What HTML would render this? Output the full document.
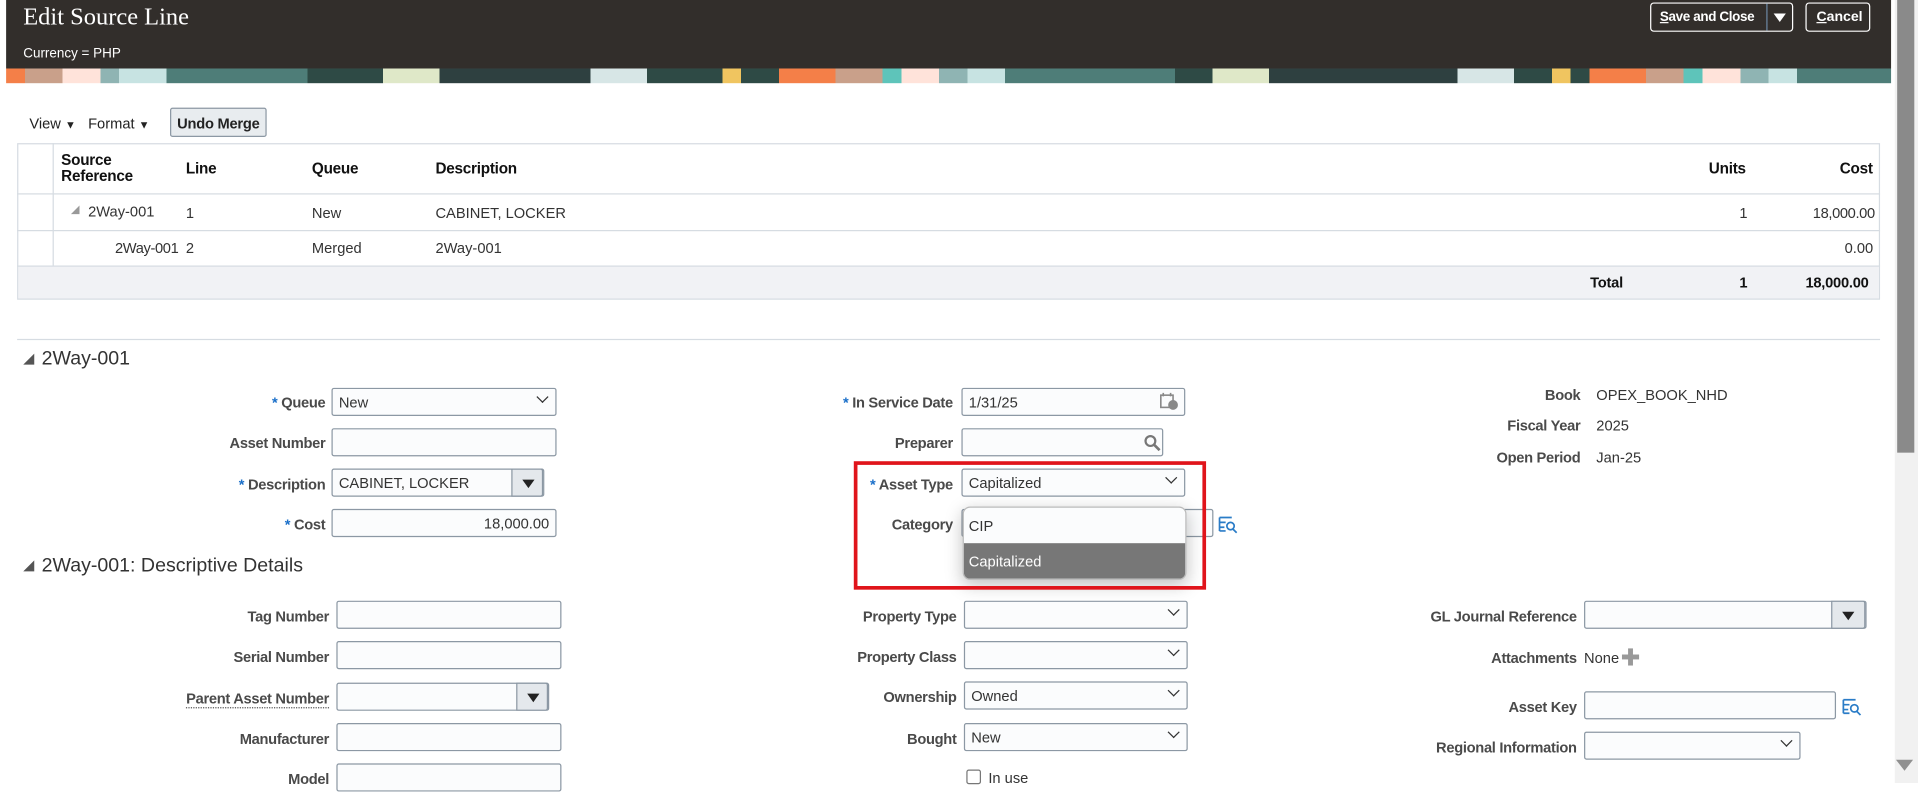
<!DOCTYPE html>
<html><head><meta charset="utf-8">
<style>
html,body{margin:0;padding:0;width:1918px;height:783px;overflow:hidden;background:#fff}
#s{position:absolute;left:0;top:0;width:1568px;height:640px;transform:scale(1.2232,1.2234);transform-origin:0 0;font-family:"Liberation Sans",Arial,sans-serif;font-size:12px;color:#333}
.a{position:absolute}
.hdr{left:5px;top:0;width:1541px;height:56px;background:#322e2b}
.band{left:5px;top:56px;width:1541px;height:12px;background:linear-gradient(90deg,#f47f48 0 1%,#c9a08a 1% 3%,#ffe3da 3% 5%,#8fb4b3 5% 6%,#c7e3e2 6% 8.5%,#4e7d78 8.5% 16%,#2e4a45 16% 20%,#dfe8c8 20% 23%,#2e4040 23% 31%,#d7e6e6 31% 34%,#2e4a45 34% 38%,#f0c560 38% 39%,#2e4a45 39% 41%,#f47f48 41% 44%,#c9a08a 44% 46.5%,#5ec4ba 46.5% 47.5%,#ffe3da 47.5% 49.5%,#8fb4b3 49.5% 51%,#c7e3e2 51% 53%,#4e7d78 53% 62%,#2e4a45 62% 64%,#dfe8c8 64% 67%,#2e4040 67% 77%,#d7e6e6 77% 80%,#2e4a45 80% 82%,#f0c560 82% 83%,#2e4a45 83% 84%,#f47f48 84% 87%,#c9a08a 87% 89%,#5ec4ba 89% 90%,#ffe3da 90% 92%,#8fb4b3 92% 93.5%,#c7e3e2 93.5% 95%,#4e7d78 95% 100%)}
.lbl{font-weight:bold;color:#4a4a4a;text-align:right;white-space:nowrap;letter-spacing:-0.25px}
.star{color:#1a6fc9;font-weight:bold}
.inp{border:1px solid #8c98a4;border-radius:2px;background:#fbfcfd;height:23px;box-sizing:border-box;padding:4px 5px;white-space:nowrap}
.chev{position:absolute;right:7px;top:3px;width:6px;height:6px;border-right:1.4px solid #333;border-bottom:1.4px solid #333;transform:rotate(45deg)}
.btn{position:absolute;right:0;top:-1px;width:26px;height:23px;border:1px solid #8c98a4;background:#e4e8ec;box-sizing:border-box;border-radius:0 2px 2px 0}
.btn:after{content:"";position:absolute;left:8px;top:8px;border-left:5px solid transparent;border-right:5px solid transparent;border-top:7px solid #222}
.th{font-weight:bold;color:#111;font-size:12.5px;letter-spacing:-0.2px}
.hline{position:absolute;left:14px;width:1523px;height:1px;background:#d6dce2}
.sec{font-size:16px;color:#333}
.tri{display:inline-block;width:0;height:0;border-left:9px solid transparent;border-bottom:9px solid #555;margin-right:6px;vertical-align:0}
</style></head><body><div id="s">
<div class="a hdr"></div>
<div class="a" style="left:19px;top:3px;font-family:'Liberation Serif',serif;font-size:20px;color:#fff">Edit Source Line</div>
<div class="a" style="left:19px;top:38px;font-size:11px;color:#fff">Currency = PHP</div>
<div class="a" style="left:1349px;top:2px;width:117px;height:24px;border:1px solid #fff;border-radius:3px;box-sizing:border-box;color:#fff;font-weight:bold;font-size:11px;letter-spacing:-0.3px">
 <span style="position:absolute;left:7px;top:5px;white-space:nowrap"><u>S</u>ave and Close</span>
 <span style="position:absolute;left:94px;top:0;width:1px;height:22px;background:#6b87a3"></span>
 <span style="position:absolute;left:100px;top:8px;border-left:5px solid transparent;border-right:5px solid transparent;border-top:7px solid #fff"></span>
</div>
<div class="a" style="left:1476px;top:2px;width:53px;height:24px;border:1px solid #fff;border-radius:3px;box-sizing:border-box;color:#fff;font-weight:bold;font-size:11.5px;padding:5px 0 0 8px"><u>C</u>ancel</div>
<div class="a band"></div>
<div class="a" style="left:1549px;top:0;width:19px;height:640px;background:#f1f1f1"></div>
<div class="a" style="left:1551px;top:0;width:14px;height:370px;background:#8a8a8a"></div>
<div class="a" style="left:1550px;top:621px;border-left:7px solid transparent;border-right:7px solid transparent;border-top:9px solid #909090"></div>

<div class="a" style="left:24px;top:94px;color:#222">View <span style="font-size:9px">▼</span></div>
<div class="a" style="left:72px;top:94px;color:#222">Format <span style="font-size:9px">▼</span></div>
<div class="a" style="left:139px;top:88px;width:79px;height:24px;border:1px solid #8c98a4;border-radius:2px;background:#e8ecef;box-sizing:border-box;font-weight:bold;color:#222;text-align:center;padding-top:5px;letter-spacing:-0.2px">Undo Merge</div>

<div class="a" style="left:14px;top:117px;width:1523px;height:128px;border:1px solid #d6dce2;box-sizing:border-box"></div>
<div class="a" style="left:15px;top:217px;width:1521px;height:27px;background:#f1f2f5"></div>
<div class="hline" style="top:158px"></div><div class="hline" style="top:188px"></div><div class="hline" style="top:217px"></div>
<div class="a" style="left:43px;top:117px;width:1px;height:100px;background:#d6dce2"></div>
<div class="a th" style="left:50px;top:125px;line-height:13px">Source<br>Reference</div>
<div class="a th" style="left:152px;top:131px">Line</div>
<div class="a th" style="left:255px;top:131px">Queue</div>
<div class="a th" style="left:356px;top:131px">Description</div>
<div class="a th" style="left:1397px;top:131px">Units</div>
<div class="a th" style="left:1504px;top:131px">Cost</div>
<div class="a" style="left:58px;top:168px;border-left:7px solid transparent;border-bottom:7px solid #999"></div>
<div class="a" style="left:72px;top:166px">2Way-001</div><div class="a" style="left:152px;top:167px">1</div><div class="a" style="left:255px;top:167px">New</div><div class="a" style="left:356px;top:167px">CABINET, LOCKER</div><div class="a" style="left:1422px;top:167px">1</div><div class="a" style="left:1482px;top:167px;letter-spacing:-0.3px">18,000.00</div>
<div class="a" style="left:94px;top:196px;letter-spacing:-0.3px">2Way-001</div><div class="a" style="left:152px;top:196px">2</div><div class="a" style="left:255px;top:196px">Merged</div><div class="a" style="left:356px;top:196px">2Way-001</div><div class="a" style="left:1508px;top:196px">0.00</div>
<div class="a th" style="left:1300px;top:224px;font-size:12px">Total</div><div class="a th" style="left:1422px;top:224px;font-size:12px">1</div><div class="a th" style="left:1476px;top:224px;font-size:12px">18,000.00</div>

<div class="hline" style="top:277px"></div>
<div class="a sec" style="left:19px;top:285px"><span class="tri"></span>2Way-001</div>

<div class="a lbl" style="right:1302px;top:322px"><span class="star">*</span> Queue</div>
<div class="a inp" style="left:271px;top:317px;width:184px">New<span class="chev"></span></div>
<div class="a lbl" style="right:1302px;top:355px">Asset Number</div>
<div class="a inp" style="left:271px;top:350px;width:184px"></div>
<div class="a lbl" style="right:1302px;top:389px"><span class="star">*</span> Description</div>
<div class="a inp" style="left:271px;top:383px;width:174px">CABINET, LOCKER<span class="btn"></span></div>
<div class="a lbl" style="right:1302px;top:422px"><span class="star">*</span> Cost</div>
<div class="a inp" style="left:271px;top:416px;width:184px;text-align:right">18,000.00</div>

<div class="a lbl" style="right:789px;top:322px"><span class="star">*</span> In Service Date</div>
<div class="a inp" style="left:786px;top:317px;width:183px">1/31/25
 <svg class="a" style="left:161px;top:3px" width="16" height="15" viewBox="0 0 16 15"><rect x="1" y="2" width="10" height="10" fill="none" stroke="#888" stroke-width="1.3"/><line x1="3" y1="0" x2="3" y2="3" stroke="#888" stroke-width="1.3"/><line x1="9" y1="0" x2="9" y2="3" stroke="#888" stroke-width="1.3"/><circle cx="11" cy="10" r="4" fill="#888"/></svg></div>
<div class="a lbl" style="right:789px;top:355px">Preparer</div>
<div class="a inp" style="left:786px;top:350px;width:165px">
 <svg class="a" style="left:148px;top:4px" width="14" height="14" viewBox="0 0 14 14"><circle cx="5.5" cy="5.5" r="4" fill="none" stroke="#777" stroke-width="1.8"/><line x1="8.5" y1="8.5" x2="13" y2="13" stroke="#777" stroke-width="2.2"/></svg></div>
<div class="a lbl" style="right:789px;top:389px"><span class="star">*</span> Asset Type</div>
<div class="a inp" style="left:786px;top:383px;width:183px">Capitalized<span class="chev"></span></div>
<div class="a lbl" style="right:789px;top:422px">Category</div>
<div class="a inp" style="left:786px;top:416px;width:206px"></div>
<svg class="a" style="left:996px;top:421px" width="16" height="16" viewBox="0 0 16 16"><g stroke="#2a7cc7" stroke-width="1.4" fill="none"><line x1="1" y1="2" x2="11" y2="2"/><line x1="1" y1="2" x2="1" y2="13"/><line x1="1" y1="6" x2="6" y2="6"/><line x1="1" y1="10" x2="5" y2="10"/><line x1="1" y1="13" x2="6" y2="13"/><circle cx="10" cy="9" r="3"/><line x1="12" y1="11.5" x2="15" y2="14.5"/></g></svg>
<div class="a" style="left:787px;top:414px;width:181px;height:58px;border:1px solid #bbb;border-radius:6px;background:#fbfcfd;box-shadow:0 4px 14px rgba(0,0,0,.25);overflow:hidden">
 <div style="height:29px;padding:8px 4px 0;box-sizing:border-box;color:#333">CIP</div>
 <div style="height:29px;padding:8px 4px 0;box-sizing:border-box;background:#777;color:#fff">Capitalized</div>
</div>
<div class="a" style="left:698px;top:377px;width:288px;height:105px;border:3px solid #e0141b;box-sizing:border-box"></div>

<div class="a lbl" style="right:276px;top:316px">Book</div><div class="a" style="left:1305px;top:316px">OPEX_BOOK_NHD</div>
<div class="a lbl" style="right:276px;top:341px">Fiscal Year</div><div class="a" style="left:1305px;top:341px">2025</div>
<div class="a lbl" style="right:276px;top:367px">Open Period</div><div class="a" style="left:1305px;top:367px">Jan-25</div>

<div class="a sec" style="left:19px;top:454px"><span class="tri"></span>2Way-001: Descriptive Details</div>

<div class="a lbl" style="right:1299px;top:497px">Tag Number</div><div class="a inp" style="left:275px;top:491px;width:184px"></div>
<div class="a lbl" style="right:1299px;top:530px">Serial Number</div><div class="a inp" style="left:275px;top:524px;width:184px"></div>
<div class="a lbl" style="right:1299px;top:564px;border-bottom:1px dotted #555">Parent Asset Number</div><div class="a inp" style="left:275px;top:558px;width:174px"><span class="btn"></span></div>
<div class="a lbl" style="right:1299px;top:597px">Manufacturer</div><div class="a inp" style="left:275px;top:591px;width:184px"></div>
<div class="a lbl" style="right:1299px;top:630px">Model</div><div class="a inp" style="left:275px;top:624px;width:184px"></div>

<div class="a lbl" style="right:786px;top:497px">Property Type</div><div class="a inp" style="left:788px;top:491px;width:183px"><span class="chev"></span></div>
<div class="a lbl" style="right:786px;top:530px">Property Class</div><div class="a inp" style="left:788px;top:524px;width:183px"><span class="chev"></span></div>
<div class="a lbl" style="right:786px;top:563px">Ownership</div><div class="a inp" style="left:788px;top:557px;width:183px">Owned<span class="chev"></span></div>
<div class="a lbl" style="right:786px;top:597px">Bought</div><div class="a inp" style="left:788px;top:591px;width:183px">New<span class="chev"></span></div>
<div class="a" style="left:790px;top:629px;width:12px;height:12px;border:1px solid #777;border-radius:2px;box-sizing:border-box"></div>
<div class="a" style="left:808px;top:629px">In use</div>

<div class="a lbl" style="right:279px;top:497px">GL Journal Reference</div><div class="a inp" style="left:1295px;top:491px;width:231px"><span class="btn" style="width:28px"></span></div>
<div class="a lbl" style="right:279px;top:531px">Attachments</div><div class="a" style="left:1295px;top:531px">None</div>
<div class="a" style="left:1326px;top:535px;width:14px;height:4px;background:#999"></div><div class="a" style="left:1331px;top:530px;width:4px;height:14px;background:#999"></div>
<div class="a lbl" style="right:279px;top:571px">Asset Key</div><div class="a inp" style="left:1295px;top:565px;width:206px"></div>
<svg class="a" style="left:1506px;top:570px" width="16" height="16" viewBox="0 0 16 16"><g stroke="#2a7cc7" stroke-width="1.4" fill="none"><line x1="1" y1="2" x2="11" y2="2"/><line x1="1" y1="2" x2="1" y2="13"/><line x1="1" y1="6" x2="6" y2="6"/><line x1="1" y1="10" x2="5" y2="10"/><line x1="1" y1="13" x2="6" y2="13"/><circle cx="10" cy="9" r="3"/><line x1="12" y1="11.5" x2="15" y2="14.5"/></g></svg>
<div class="a lbl" style="right:279px;top:604px">Regional Information</div><div class="a inp" style="left:1295px;top:598px;width:177px"><span class="chev"></span></div>
</div></body></html>
